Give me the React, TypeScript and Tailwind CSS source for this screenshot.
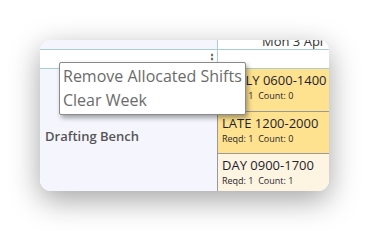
import React from "react";

export default function App() {
  return (
    <div className="w-[369px] h-[231px] bg-white pl-[40px] pt-[40px] overflow-hidden" style={{ fontFamily: '"Open Sans", sans-serif' }}>
      <div className="relative w-[289px] h-[151px] rounded-[11px] shadow-[0_9px_30px_rgba(0,0,0,0.36)]">
        <div className="w-full h-full rounded-[11px] overflow-hidden bg-[#f5f6fd] flex flex-col">
          {/* header row */}
          <div className="flex h-[9px] shrink-0 bg-[#f5f6fd]">
            <div className="w-[178px] border-r border-[#a9cdd0]" />
            <div className="flex-1 bg-white overflow-hidden">
              <div className="-mt-[7px] ml-[44px] whitespace-nowrap text-[13px] leading-[16px] text-[#333]">Mon 3 Apr 2023</div>
            </div>
          </div>
          {/* second row */}
          <div className="flex h-[20px] shrink-0 border-y border-[#a9cdd0] bg-white">
            <div className="w-[178px] border-r border-[#a9cdd0] flex items-center justify-end pr-0">
              <span className="text-[12px] leading-none font-bold text-[#555] -mr-[1px]">⋮</span>
            </div>
            <div className="flex-1" />
          </div>
          {/* body */}
          <div className="flex flex-1">
            <div className="w-[178px] border-r border-[#999] flex items-center pl-[5px] pt-[14px]">
              <span className="text-[13px] font-semibold text-[#555]">Drafting Bench</span>
            </div>
            <div className="flex-1 flex flex-col">
              <div className="h-[43px] bg-[#ffe28f] border-b border-[#999] pl-[4px] pt-[3px]">
                <div className="text-[13px] leading-[17px] text-[#1e1e2e] whitespace-nowrap">EARLY 0600-1400</div>
                <div className="text-[9px] leading-[13px] text-[#1e1e2e] whitespace-nowrap">Reqd: 1&nbsp;&nbsp;Count: 0</div>
              </div>
              <div className="h-[42px] bg-[#ffe28f] border-b border-[#999] pl-[4px] pt-[3px]">
                <div className="text-[13px] leading-[17px] text-[#1e1e2e] whitespace-nowrap">LATE 1200-2000</div>
                <div className="text-[9px] leading-[13px] text-[#1e1e2e] whitespace-nowrap">Reqd: 1&nbsp;&nbsp;Count: 0</div>
              </div>
              <div className="flex-1 bg-[#fdf5e1] pl-[4px] pt-[3px]">
                <div className="text-[13px] leading-[17px] text-[#1e1e2e] whitespace-nowrap">DAY 0900-1700</div>
                <div className="text-[9px] leading-[13px] text-[#1e1e2e] whitespace-nowrap">Reqd: 1&nbsp;&nbsp;Count: 1</div>
              </div>
            </div>
          </div>
        </div>
        {/* context menu */}
        <div className="absolute left-[19px] top-[22px] w-[187px] h-[53px] bg-white border border-[#8a8a8a] rounded-[2px] shadow-[2px_3px_5px_rgba(0,0,0,0.35)] pl-[3px] pt-[1px]">
          <div className="text-[16px] leading-[24px] text-[#6b6b6b] whitespace-nowrap">Remove Allocated Shifts</div>
          <div className="text-[16px] leading-[24px] text-[#6b6b6b] whitespace-nowrap">Clear Week</div>
        </div>
      </div>
    </div>
  );
}
